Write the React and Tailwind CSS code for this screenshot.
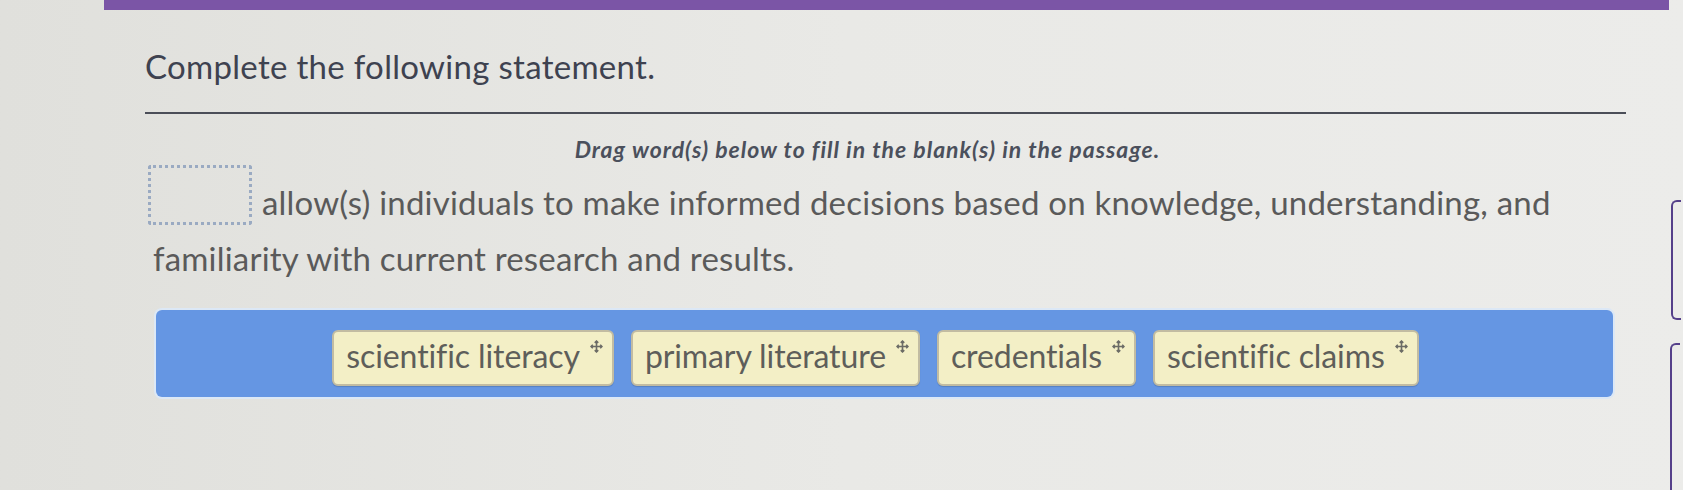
import React from 'react';

const words = ['scientific literacy', 'primary literature', 'credentials', 'scientific claims'];

const MoveIcon = () => (
  <svg viewBox="0 0 12 12" className="h-[13px] w-[13px] shrink-0" fill="none" stroke="#6c6c66" strokeWidth="1.5">
    <path d="M6 1v10M1 6h10" />
    <path d="M4.4 2.6 6 1l1.6 1.6M4.4 9.4 6 11l1.6-1.6M2.6 4.4 1 6l1.6 1.6M9.4 4.4 11 6 9.4 7.6" />
  </svg>
);

const WordChip = ({ label }) => (
  <div className="flex h-[56px] items-start rounded-[6px] border-2 border-[#c2bca2] bg-[#f3efc6] pl-[12px] pr-[9px] shadow-[0_1px_1px_rgba(0,0,0,0.15)]">
    <span className="self-center pb-[4px] text-[32px] leading-none tracking-[-0.1px] text-[#5e5e5a]">{label}</span>
    <span className="ml-[10px] mt-[8px]">
      <MoveIcon />
    </span>
  </div>
);

export default function App() {
  return (
    <div
      className="relative h-[490px] w-[1683px] overflow-hidden bg-gradient-to-r from-[#e0e0dc] via-[#e9e9e6] to-[#ececea]"
      style={{ fontFamily: 'Lato, "Open Sans", sans-serif' }}
    >
      {/* top purple bar */}
      <div className="ml-[104px] mr-[14px] h-[10px] bg-[#7b55a6]" />

      <div className="ml-[145px] w-[1481px]">
        <h1 className="mt-[36px] text-[33px] leading-[40px] font-normal tracking-[0.3px] text-[#3e4250]">
          Complete the following statement.
        </h1>

        <div className="mt-[26px] h-[2px] bg-[#4b4e58]" />

        <p className="mt-[21px] pr-[36px] text-center text-[23px] leading-[28px] font-bold italic tracking-[1px] text-[#4b505c]">
          Drag word(s) below to fill in the blank(s) in the passage.
        </p>

        <p className="mt-[2px] ml-[8px] text-[33px] leading-[56px] tracking-[0.2px] text-[#5a5a5a]">
          <span className="ml-[-5px] mr-[10px] inline-block h-[60px] w-[104px] rounded-[3px] border-[3px] border-dotted border-[#9aaac2] align-[-10px]" />
          allow(s) individuals to make informed decisions based on knowledge, understanding, and familiarity with current
          research and results.
        </p>

        <div className="mt-[24px] ml-[11px] flex w-[1457px] justify-center gap-[17px] rounded-[6px] bg-[#6596e3] pt-[20px] pb-[11px] pr-[18px] ring-2 ring-[#dce8f6]">
          {words.map((w) => (
            <WordChip key={w} label={w} />
          ))}
        </div>
      </div>

      {/* edge of the neighbouring panel */}
      <div className="absolute right-[2px] top-[200px] h-[120px] w-[10px] rounded-l-[6px] border-y-2 border-l-2 border-[#55408a]" />
      <div className="absolute right-[3px] top-[343px] h-[160px] w-[10px] rounded-tl-[6px] border-t-2 border-l-2 border-[#55408a]" />
    </div>
  );
}
